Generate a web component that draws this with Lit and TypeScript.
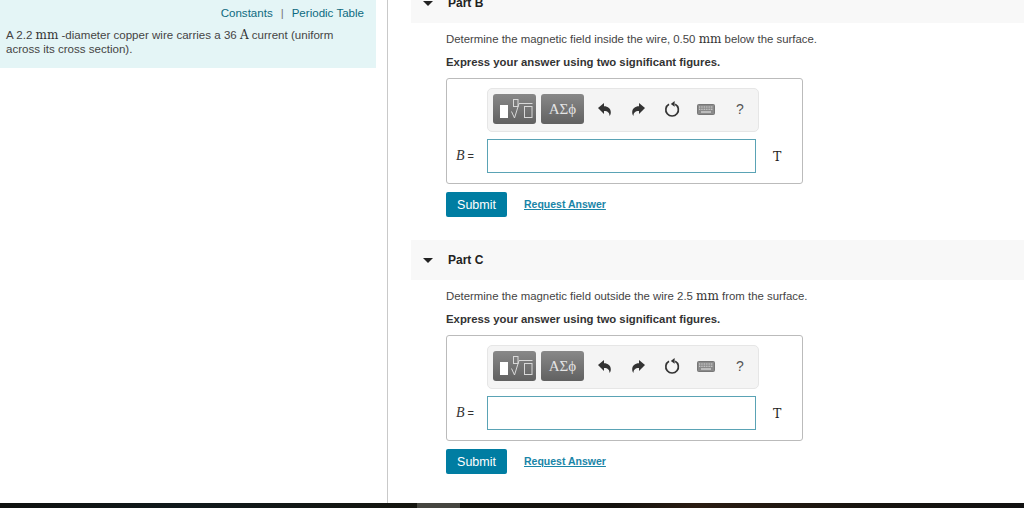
import { LitElement, html, css, svg } from "lit";
import { customElement } from "lit/decorators.js";

const undoIcon = svg`<path d="M0 5 6 0v3.2c4 0 6.8 2.4 6.8 6 0 1.6-.5 3-1.3 3.8.2-3-1.6-5-5.5-5V11z" fill="#333"/>`;

@customElement("part-block")
export class PartBlock extends LitElement {
    static properties = {
        label: {},
    };
    label = "";

    render() {
        return html`<section>
            <header class="part-head">
                <span class="caret"></span>
                <h3>Part ${this.label}</h3>
            </header>
            <div class="part-body">
                <p class="question"><slot></slot></p>
                <p class="hint">Express your answer using two significant figures.</p>
                <div class="answer-panel">
                    <div class="toolbar">
                        <button class="tpl">
                            <svg width="43" height="30" viewBox="0 0 43 30">
                                <rect x="7" y="11" width="8" height="13" fill="#fff" />
                                <g fill="none" stroke="#d8d8d8" stroke-width="1">
                                    <rect x="20.5" y="5.5" width="4.5" height="7" />
                                    <path d="M18.5 17.5l3 6.5L26 9.5h13.5" />
                                    <rect x="31.5" y="12.5" width="7.5" height="11" />
                                </g>
                            </svg>
                        </button>
                        <button class="tpl symbols">ΑΣϕ</button>
                        <div class="tools">
                            <svg width="13" height="13" viewBox="0 0 13 13">${undoIcon}</svg>
                            <svg class="redo" width="13" height="13" viewBox="0 0 13 13">${undoIcon}</svg>
                            <svg class="reset" width="16" height="16" viewBox="0 0 16 16">
                                <path d="M5 3.2A6.3 6.3 0 1 0 11.2 3.2" fill="none" stroke="#333" stroke-width="1.7" />
                                <path d="M10.6 0 6.8 3l3.8 2.8z" fill="#333" />
                            </svg>
                            <svg class="keys" width="18" height="11" viewBox="0 0 18 11">
                                <rect x="0.5" y="0.5" width="17" height="10" rx="1" fill="#8a8a8a" stroke="#777" />
                                <path d="M2 3h14M2 5.2h14" stroke="#ddd" stroke-width="1.1" stroke-dasharray="1 .7" />
                                <path d="M4 8h10" stroke="#ddd" stroke-width="1.2" />
                            </svg>
                            <span class="help">?</span>
                        </div>
                    </div>
                    <div class="answer-row">
                        <span class="var"><i>B</i><span class="eq"> =</span></span>
                        <input type="text" />
                        <span class="unit">T</span>
                    </div>
                </div>
                <div class="actions">
                    <button class="submit">Submit</button>
                    <a class="request">Request Answer</a>
                </div>
            </div>
        </section>`;
    }

    static styles = css`
        :host {
            display: block;
            font-family: "Liberation Sans", Arial, sans-serif;
            color: #333;
        }

        * {
            box-sizing: border-box;
            margin: 0;
            padding: 0;
        }

        .part-head {
            display: flex;
            align-items: center;
            gap: 15px;
            height: 40px;
            padding-left: 12px;
            background: #f8f8f8;
        }

        .caret {
            width: 0;
            height: 0;
            border-left: 5px solid transparent;
            border-right: 5px solid transparent;
            border-top: 5px solid #222;
        }

        h3 {
            font-size: 12px;
            font-weight: 700;
            color: #222;
        }

        .part-body {
            padding: 9px 0 0 35px;
        }

        .question {
            font-size: 11.4px;
            line-height: 14px;
            color: #444;
        }

        .hint {
            margin-top: 9px;
            font-size: 11.35px;
            line-height: 14px;
            font-weight: 700;
            color: #333;
        }

        .answer-panel {
            width: 357px;
            height: 106px;
            margin-top: 9px;
            padding: 9px 0 0 40px;
            border: 1px solid #bbb;
            border-radius: 3px;
        }

        .toolbar {
            display: flex;
            align-items: flex-start;
            gap: 5px;
            width: 272px;
            height: 44px;
            padding: 5px 0 0 5px;
            background: #f4f4f4;
            border: 1px solid #e6e6e6;
            border-radius: 5px;
        }

        .tpl {
            display: flex;
            align-items: center;
            justify-content: center;
            width: 43px;
            height: 30px;
            border: none;
            border-radius: 3px;
            background: linear-gradient(#888, #616161);
        }

        .symbols {
            font-family: "Liberation Serif", serif;
            font-size: 15px;
            color: #e4e4e4;
        }

        .tools {
            display: flex;
            align-items: center;
            height: 30px;
            margin-left: 9px;
        }

        .tools svg {
            flex: none;
        }

        .redo {
            margin-left: 21px;
            transform: scaleX(-1);
        }

        .reset {
            margin-left: 19px;
        }

        .keys {
            margin-left: 17px;
        }

        .help {
            margin-left: 21px;
            font-size: 14px;
            color: #555;
        }

        .answer-row {
            display: flex;
            align-items: center;
            margin: 7px 0 0 -31px;
        }

        .var {
            width: 31px;
            padding-left: 0;
            font-family: "Liberation Serif", serif;
            font-size: 14px;
            color: #333;
        }

        .eq {
            font-family: "Liberation Sans", sans-serif;
            font-size: 11px;
        }

        input {
            width: 269px;
            height: 34px;
            border: 1px solid #5aa3b5;
            background: #fff;
            outline: none;
        }

        .unit {
            margin-left: 17px;
            font-family: "DejaVu Serif", serif;
            font-size: 12.5px;
            color: #222;
        }

        .actions {
            display: flex;
            align-items: center;
            gap: 17px;
            margin-top: 8px;
        }

        .submit {
            width: 61px;
            height: 25px;
            border: none;
            border-radius: 2px;
            background: #007da2;
            color: #fff;
            font-family: inherit;
            font-size: 12.5px;
        }

        .request {
            margin-top: -2px;
            font-size: 10.5px;
            font-weight: 700;
            color: #1a85a8;
            text-decoration: underline;
        }
    `;
}

@customElement("app-root")
export class AppRoot extends LitElement {
    render() {
        return html`<main>
                <aside>
                    <div class="intro">
                        <nav>
                            <a>Constants</a>
                            <span class="sep">|</span>
                            <a>Periodic Table</a>
                        </nav>
                        <p>
                            A 2.2 <span class="m">mm</span> -diameter copper wire carries a 36
                            <span class="m">A</span> current (uniform across its cross section).
                        </p>
                    </div>
                </aside>
                <div class="parts">
                    <part-block label="B">
                        Determine the magnetic field inside the wire, 0.50
                        <span class="m">mm</span> below the surface.
                    </part-block>
                    <part-block label="C">
                        Determine the magnetic field outside the wire 2.5
                        <span class="m">mm</span> from the surface.
                    </part-block>
                </div>
            </main>
            <footer><span></span></footer>`;
    }

    static styles = css`
        :host {
            display: block;
            height: 508px;
            overflow: hidden;
            background: #fff;
            font-family: "Liberation Sans", Arial, sans-serif;
        }

        * {
            box-sizing: border-box;
            margin: 0;
            padding: 0;
        }

        main {
            display: grid;
            grid-template-columns: 388px 1fr;
            height: 503px;
            overflow: hidden;
        }

        aside {
            border-right: 1px solid #c9c9c9;
        }

        .intro {
            width: 376px;
            height: 68px;
            padding: 6px 6px 0;
            background: #e4f5f6;
            font-size: 11.55px;
            color: #444;
        }

        nav {
            display: flex;
            justify-content: flex-end;
            gap: 8px;
            padding-right: 6px;
            line-height: 14px;
            color: #0d6a80;
        }

        .sep {
            color: #777;
        }

        .intro p {
            margin-top: 8px;
            width: 340px;
            line-height: 14px;
        }

        .m {
            font-family: "DejaVu Serif", serif;
            font-size: 12px;
            line-height: 1;
            color: #333;
        }

        .parts {
            display: flex;
            flex-direction: column;
            gap: 23px;
            margin-top: -17px;
            padding-left: 23px;
        }

        footer {
            height: 5px;
            padding-left: 417px;
            background: linear-gradient(90deg, #0f110f, #10191b 18%, #14150f 40%, #14120e 60%, #2a1c12 68%, #17140f 85%, #111 100%);
        }

        footer span {
            display: block;
            width: 43px;
            height: 5px;
            background: #45453f;
        }
    `;
}
